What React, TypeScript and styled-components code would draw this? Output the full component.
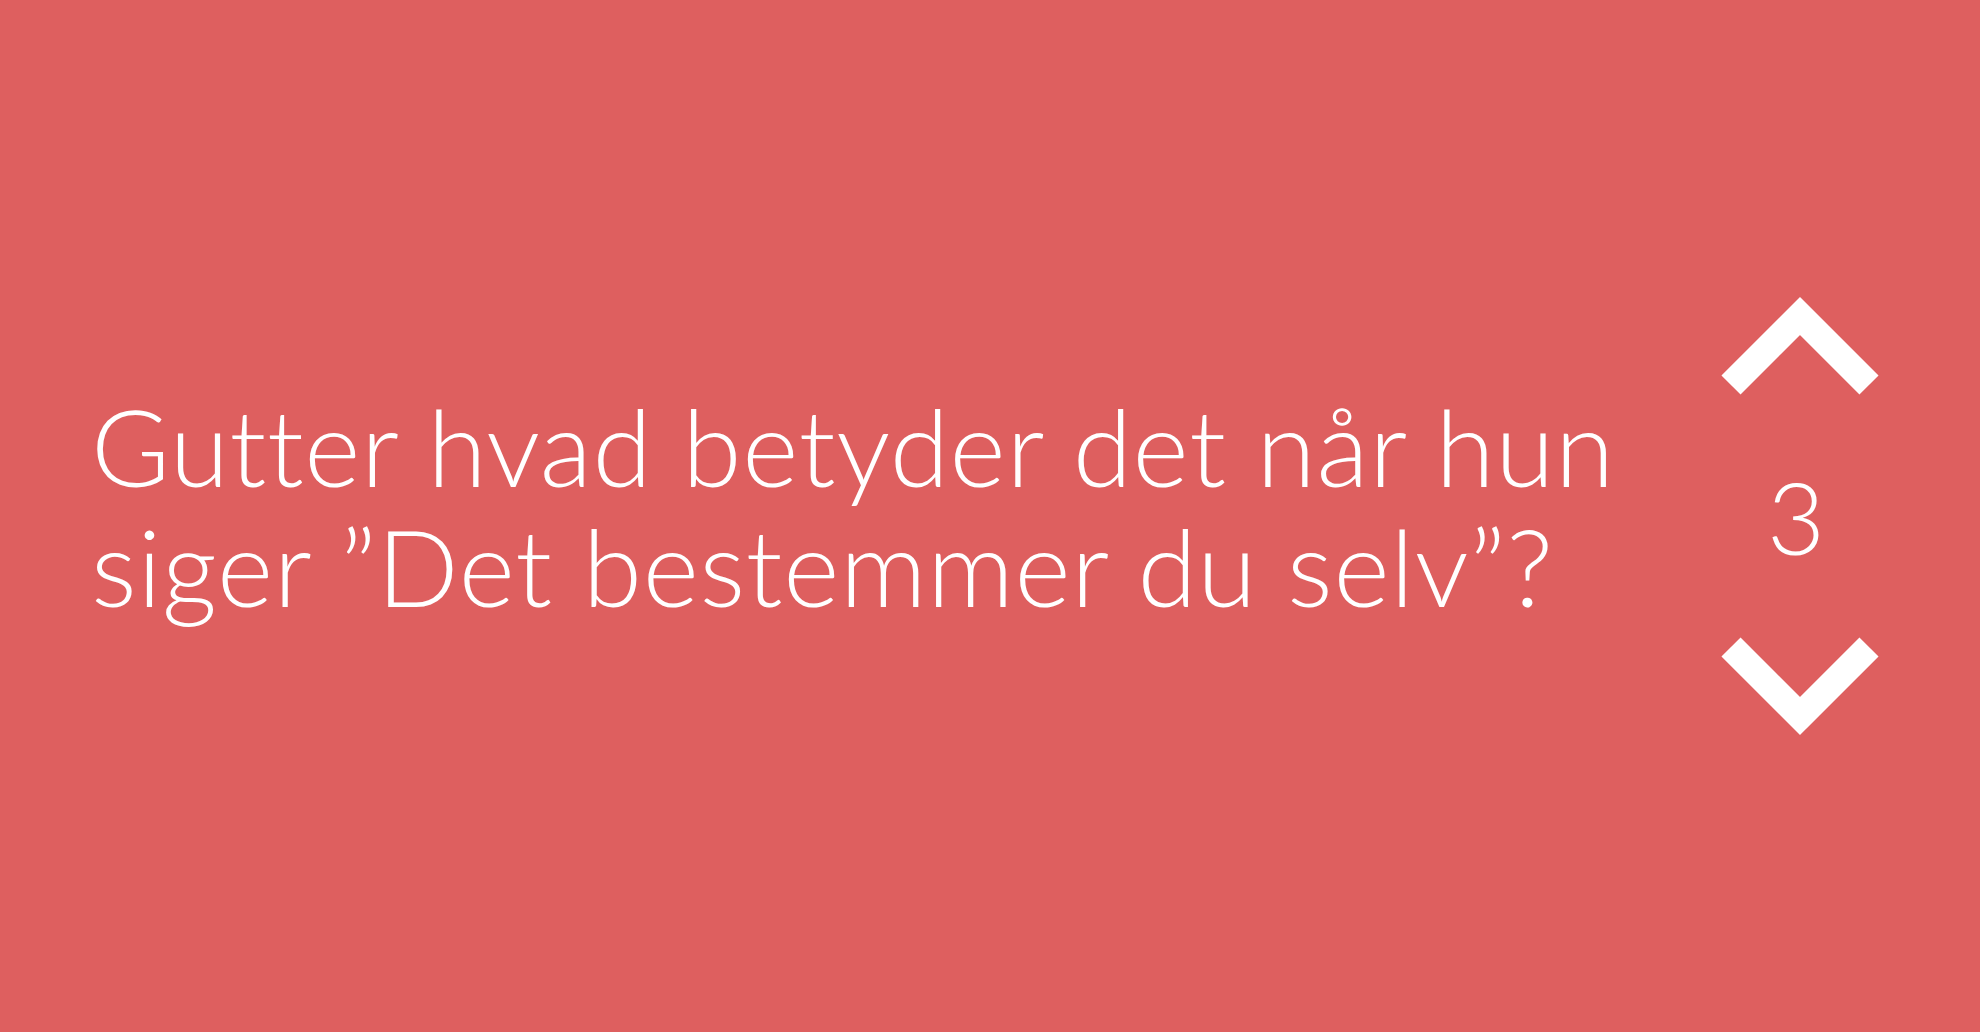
import React from "react"
import styled, {createGlobalStyle} from "styled-components"

const Global = createGlobalStyle`
  html, body {
    margin: 0;
    padding: 0;
    background: #de5f5f;
  }
  body {
    font-family: Lato, "Open Sans", "Liberation Sans", sans-serif;
    color: #ffffff;
  }
`

let Slide = styled.main`
  display: flex;
  align-items: center;
  justify-content: space-between;
  height: 100vh;
  background-color: #de5f5f;
  box-sizing: border-box;
`

let Question = styled.h1`
  margin: 0 0 21px 0;
  padding-left: 91px;
  max-width: 1560px;
  font-size: 107.5px;
  font-weight: 300;
  line-height: 120px;
  letter-spacing: 0.7px;
`

let Pager = styled.nav`
  display: flex;
  flex-direction: column;
  align-items: center;
  gap: 72px;
  flex-shrink: 0;
  width: 156px;
  margin-right: 102px;
`

let ArrowButton = styled.button`
  display: block;
  padding: 0;
  border: 0 none;
  background: transparent;
  cursor: pointer;
  width: 156px;
  height: 96px;

  svg {
    display: block;
    overflow: visible;
  }
`

let PageNumber = styled.div`
  font-size: 100px;
  font-weight: 300;
  line-height: 100px;
  height: 100px;
  margin-right: 8px;
`

type ArrowProps = {
  direction: "up" | "down"
}

function Arrow(props: ArrowProps) {
  let points = props.direction === "up" ? "9,87 78,18 147,87" : "9,9 78,78 147,9"
  return (
    <ArrowButton aria-label={props.direction === "up" ? "Forrige" : "Næste"}>
      <svg width="156" height="96" viewBox="0 0 156 96">
        <polyline points={points} fill="none" stroke="#ffffff" strokeWidth="27" strokeLinecap="butt" strokeLinejoin="miter" />
      </svg>
    </ArrowButton>
  )
}

export default function App() {
  return (
    <Slide>
      <Global />
      <Question>Gutter hvad betyder det når hun siger ”Det bestemmer du selv”?</Question>
      <Pager>
        <Arrow direction="up" />
        <PageNumber>3</PageNumber>
        <Arrow direction="down" />
      </Pager>
    </Slide>
  )
}
